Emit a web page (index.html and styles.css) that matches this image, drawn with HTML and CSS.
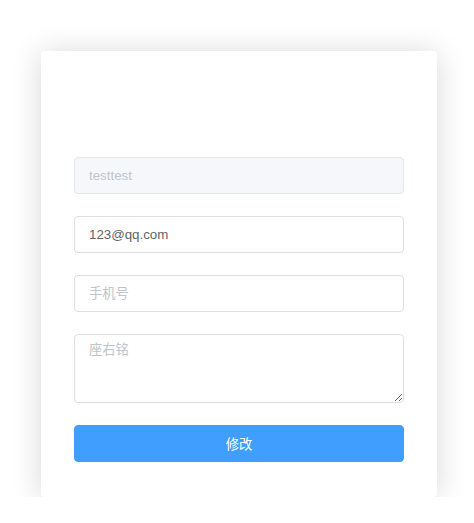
FILE: index.html
```html
<!DOCTYPE html>
<html lang="zh">
<head>
<meta charset="utf-8">
<title>修改资料</title>
<link rel="stylesheet" href="styles.css">
</head>
<body>
<div class="card">
  <form class="form">
    <input class="field" type="text" value="testtest" disabled>
    <input class="field" type="text" value="123@qq.com">
    <input class="field" type="text" placeholder="手机号">
    <textarea class="area" placeholder="座右铭"></textarea>
    <button class="btn" type="button">修改</button>
  </form>
</div>
</body>
</html>
```
FILE: styles.css
```css
html, body {
  margin: 0;
  padding: 0;
  background: #ffffff;
}
body {
  font-family: "Liberation Sans", Arial, "Noto Sans CJK SC", sans-serif;
}
.card {
  box-sizing: border-box;
  width: 396px;
  height: 446px;
  margin: 51px 0 0 41px;
  padding: 106px 33px 0 33px;
  background: #ffffff;
  border-radius: 4px;
  box-shadow: 0 2px 30px rgba(0, 0, 0, 0.16);
}
.form {
  display: flex;
  flex-direction: column;
  gap: 22px;
}
.field, .area, .btn {
  box-sizing: border-box;
  width: 330px;
  margin: 0;
  font-family: "Liberation Sans", Arial, "Noto Sans CJK SC", sans-serif;
  font-size: 13.3px;
  border-radius: 4px;
  outline: none;
}
.field {
  height: 37px;
  padding: 0 14px;
  border: 1px solid #dcdfe6;
  color: #606266;
  background: #ffffff;
}
.field:disabled {
  background: #f5f7fa;
  border-color: #e4e7ed;
  color: #c0c4cc;
}
.field::placeholder, .area::placeholder {
  color: #c0c4cc;
}
.area {
  height: 69px;
  padding: 5px 14px;
  line-height: 1.5;
  border: 1px solid #dcdfe6;
  color: #606266;
  background: #ffffff;
  resize: vertical;
}
.btn {
  height: 37px;
  border: 1px solid #409eff;
  background: #409eff;
  color: #ffffff;
  cursor: pointer;
}
```
